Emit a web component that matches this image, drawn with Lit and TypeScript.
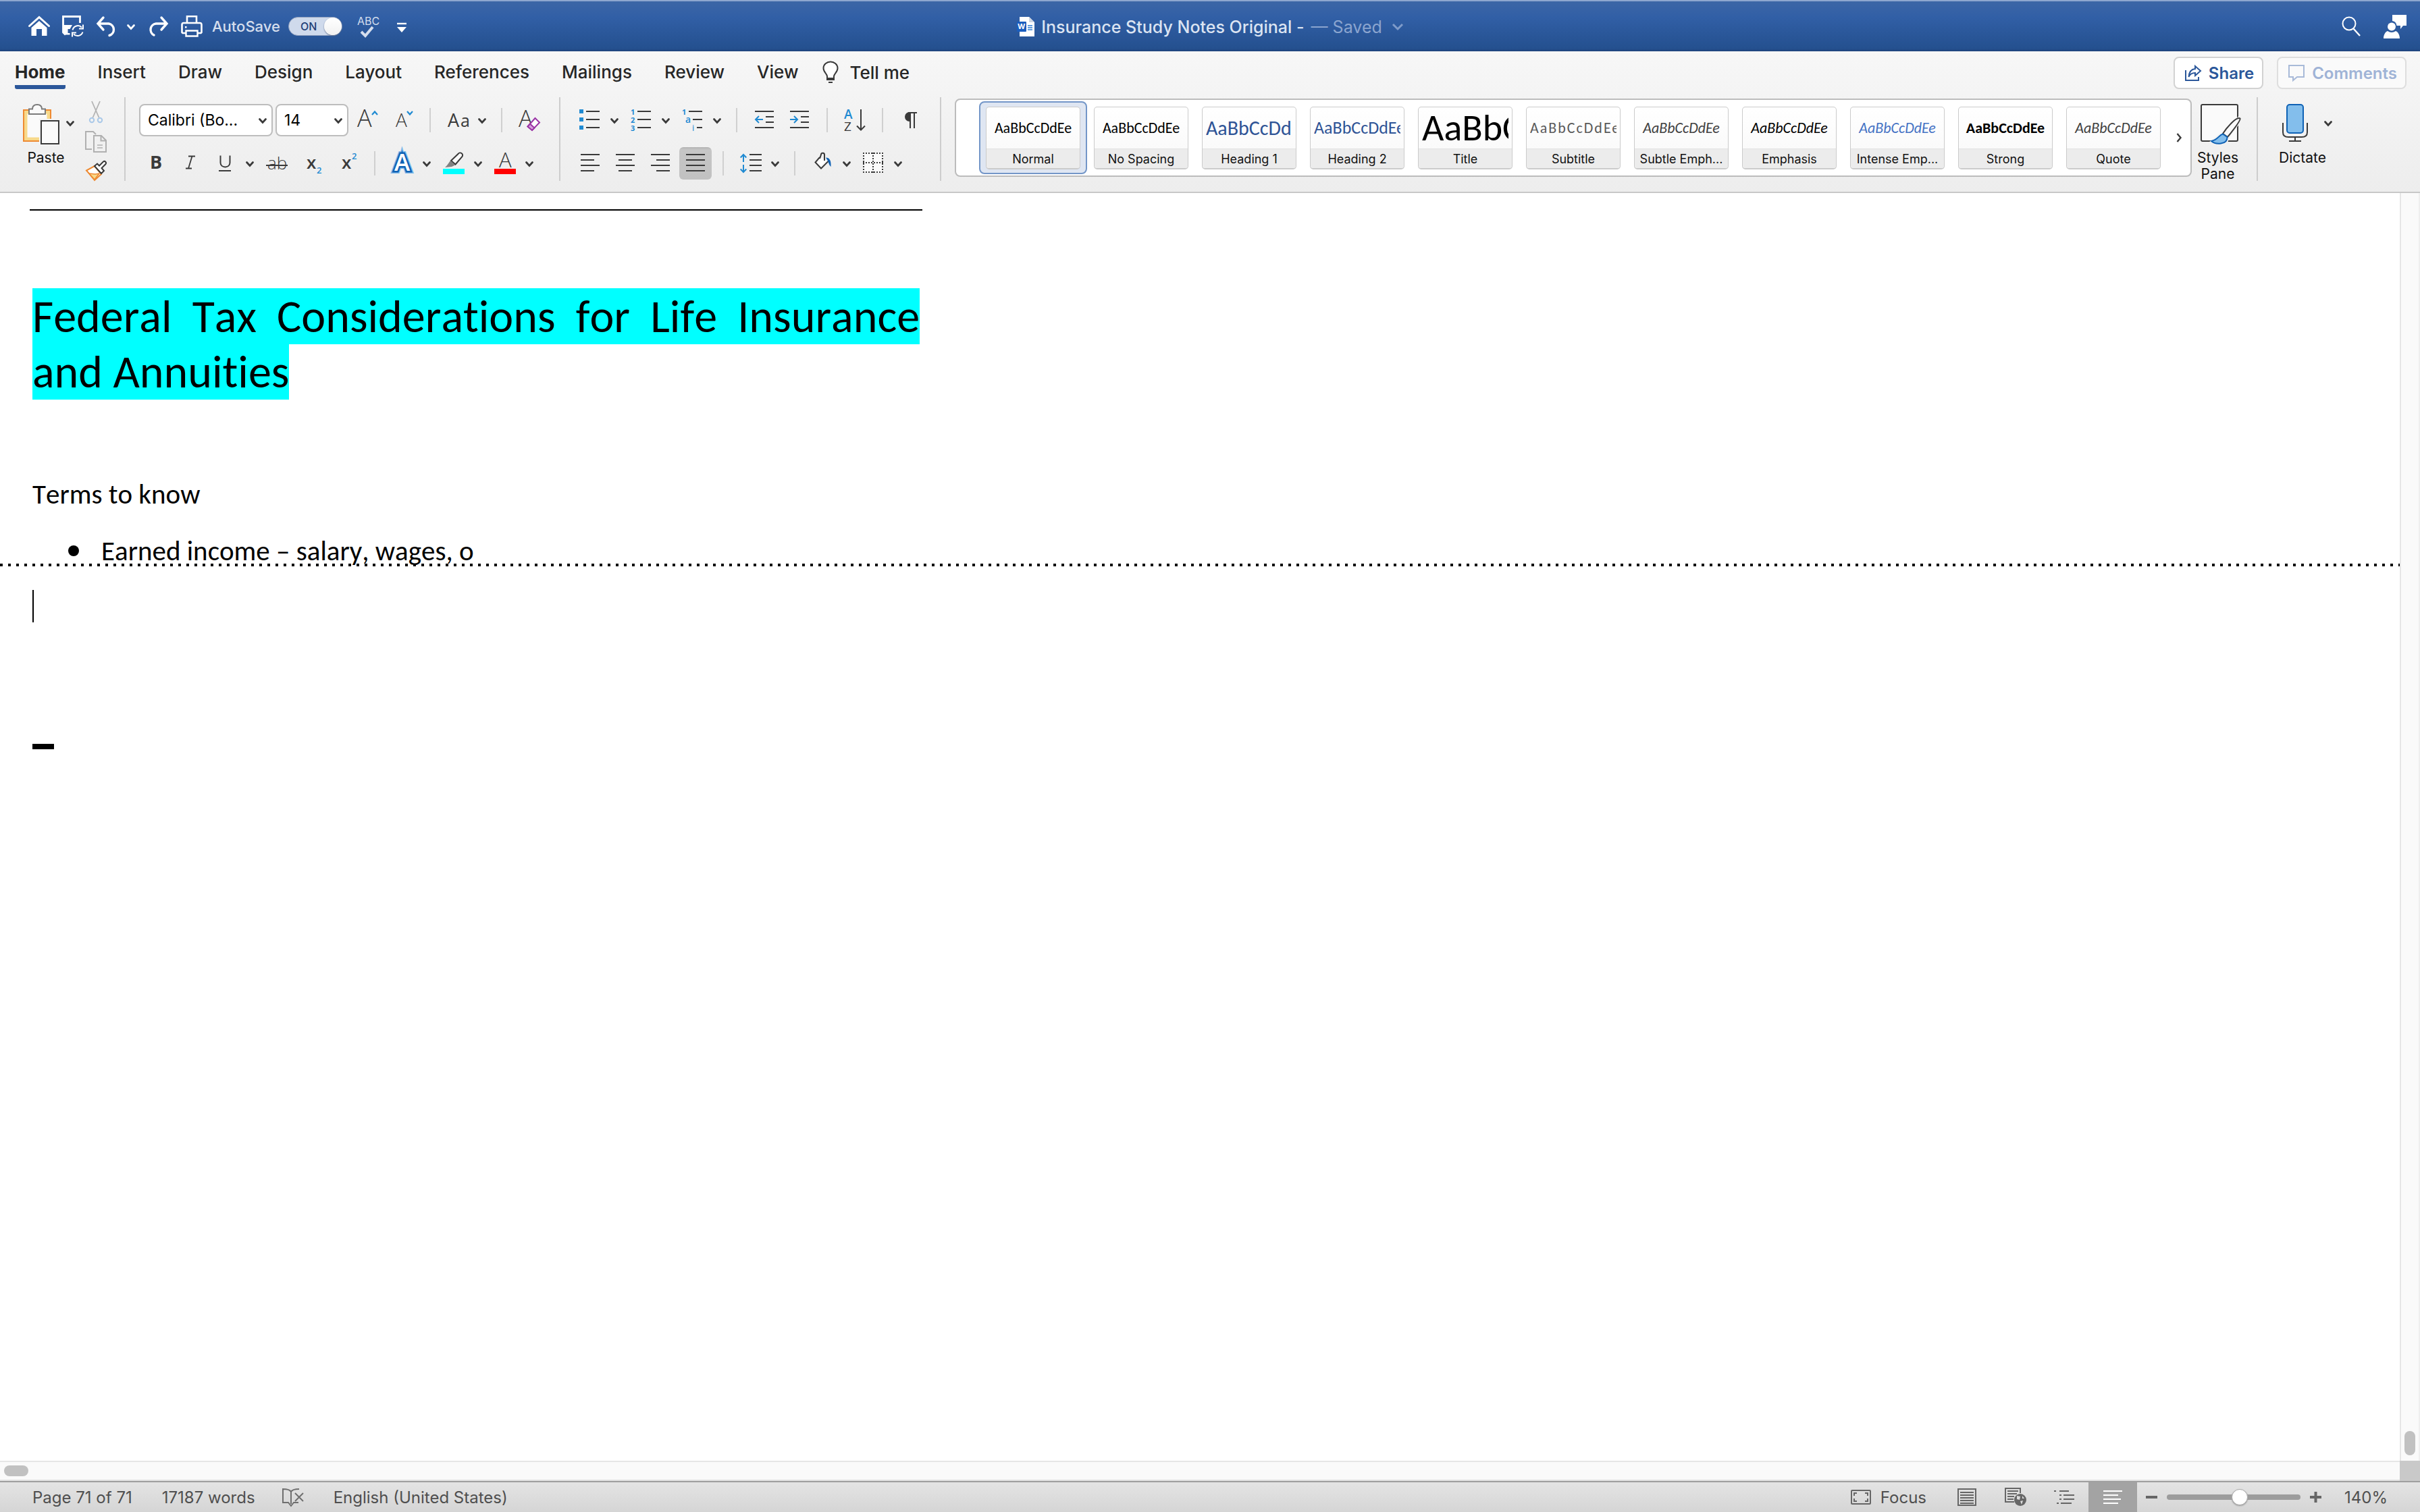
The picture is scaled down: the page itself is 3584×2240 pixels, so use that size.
import { LitElement, html, css, svg, nothing, TemplateResult } from "lit";
import { customElement, property } from "lit/decorators.js";
import { classMap } from "lit/directives/class-map.js";

const INK = "#3a3a3a";
const BLUE = "#1f8ad2";

const icon = (body: unknown, w = 32, h = 32) =>
  html`<svg width=${w} height=${h} viewBox="0 0 ${w} ${h}" fill="none" aria-hidden="true">${body}</svg>`;

const caretGlyph = (color = INK) =>
  icon(svg`<path d="M1.5 14.5 L6 19.5 L10.5 14.500" stroke=${color} stroke-width="2.800" stroke-linecap="round"/>`, 12, 32);

const lines = (rows: number[][], color = INK) =>
  rows.map(([x1, x2, y]) => svg`<path d="M${x1} ${y}H${x2}" stroke=${color} stroke-width="2"/>`);

const glyph = (t: string, x: number, y: number, size: number, color = INK, weight = 400, family = "Open Sans, sans-serif") =>
  svg`<text x=${x} y=${y} font-size=${size} fill=${color} font-weight=${weight} font-family=${family}>${t}</text>`;

const I = {
  home: svg`<path d="M1.500 15.500 L16 2.500 L30.500 15.500" stroke="#fff" stroke-width="3" stroke-linecap="round"/>
    <path d="M4.500 18 L16 8 L27.500 18 V30 H20 V20 H12 V30 H4.500Z" fill="#fff"/>`,
  save: svg`<path d="M26.500 11 V1.500 H1.500 V25 L5 28.500" stroke="#fff" stroke-width="2.800"/>
    <path d="M1 14 H15 L11.500 20 H8.500 V26 H11.500 V28.500 H5 L1 25Z" fill="#fff"/>
    <path d="M15.500 21.500 A8 8 0 0 1 29 17.500 M31 13.500 V19.500 H25 M30.500 24.500 A8 8 0 0 1 17 27.500 M15 31.500 V25.500 H21" stroke="#fff" stroke-width="2"/>`,
  undo: svg`<path d="M11 3 L3 12 L11 21 M3.500 12 H19 A9 9 0 0 1 20 29.500" stroke="#fff" stroke-width="3.400" stroke-linecap="round"/>`,
  redo: svg`<path d="M21 3 L29 12 L21 21 M28.500 12 H13 A9 9 0 0 0 10 29" stroke="#fff" stroke-width="3.400" stroke-linecap="round"/>`,
  print: svg`<path d="M9 11 V1.200 H23 V11 M7 26 H2.500 L1.500 25 V13.500 Q1.500 11 4 11 H28 Q30.500 11 30.500 13.500 V25 L29.500 26 H25" stroke="#fff" stroke-width="2.600"/>
    <path d="M7.500 22.500 H24.500 V30.500 H7.500Z" stroke="#fff" stroke-width="2.400"/><rect x="6" y="16" width="2.500" height="2.500" fill="#fff"/>`,
  abc: svg`${glyph("ABC", 0, 14, 16, "#d5deed", 400, "Inter, sans-serif")}
    <path d="M6 24 L12 30 L23 17" stroke="#d5deed" stroke-width="4"/>`,
  more: svg`<path d="M9 12H23" stroke="#fff" stroke-width="2.400"/><path d="M9 17 H23 L16 25Z" fill="#fff"/>`,
  doc: svg`<path d="M4 1 H18 L26 9 V30 H4Z" fill="#fff"/><path d="M18 1 V9 H26Z" fill="#cfd6e2"/>
    <rect x="0" y="8" width="14" height="15" rx="1" fill="#1a5dbe"/>
    ${glyph("W", 1, 19, 11, "#fff", 700, "Inter, sans-serif")}
    <path d="M16 14H23M16 17H23M16 20H23" stroke="#2b7cd3" stroke-width="1.500"/>`,
  search: svg`<circle cx="11" cy="11" r="9.500" stroke="#fff" stroke-width="2"/><path d="M17.500 18.500 L27 29" stroke="#fff" stroke-width="2.400"/>`,
  person: svg`<path d="M13 1 H34 V17 H29 L25 22 V17 H19.500 A8 8 0 0 0 13 10Z" fill="#fff"/>
    <circle cx="12" cy="18.500" r="6" fill="#fff"/><path d="M0 36 C0 30 3 26 6 25 Q12 29 18 25 C21 26 24 30 24 36Z" fill="#fff"/>`,
  bulb: svg`<path d="M7 25 V22 C7 18.500 1.500 16 1.500 10 A10.500 9.500 0 0 1 22.500 10 C22.500 16 17 18.500 17 22 V25Z" fill="#fff" stroke=${INK} stroke-width="2"/>
    <path d="M7 22 V27 H17 V22 M9 31 H15" stroke=${INK} stroke-width="2"/>`,
  paste: svg`<path d="M1 9 H41 V55 H1Z" fill="#fafafa"/>
    <path d="M4 12 H38 V52 H4Z" stroke="#f8d98a" stroke-width="5"/>
    <path d="M1 9 H41 V55 H1Z" stroke="#ee8a32" stroke-width="2"/>
    <path d="M9 15 V7.500 H14 C14 3 17 1 21 1 C25 1 28 3 28 7.500 H33 V15Z" fill="#fafafa" stroke="#7a7a7a" stroke-width="2"/>
    <rect x="24" y="22" width="32" height="40" fill="#f2f2f2"/>
    <rect x="27" y="25" width="26" height="34" fill="#fafafa" stroke=${INK} stroke-width="2"/>`,
  cut: svg`<path d="M10 0 L20.500 24 M22 0 L11.500 24" stroke="#b3b3b3" stroke-width="1.800"/>
    <circle cx="10" cy="28" r="3.200" stroke="#a9c8e8" stroke-width="2"/><circle cx="22" cy="28" r="3.200" stroke="#a9c8e8" stroke-width="2"/>`,
  copy: svg`<path d="M10 27 H1 V1 H12 L16 5" stroke="#b0b0b0" stroke-width="2"/>
    <path d="M13 7 H24 L31 14 V31 H13Z M23.500 7 V14.500 H31" stroke="#b0b0b0" stroke-width="2"/>
    <path d="M18 21H26M18 25H26" stroke="#b0b0b0" stroke-width="1.500"/>`,
  brush: svg`<path d="M14 8 L2 14.500 C6 19 10 24 14 29 L24 20Z" fill="#fff" stroke="#ee8a32" stroke-width="2"/>
    <path d="M6 19 L15 20 L21 19 L14 28Z" fill="#f8d98a" stroke="#ee8a32" stroke-width="1.500"/>
    <path d="M14 8 L18 4.500 L21 7.500 L27 1.500 A2.500 2.500 0 0 1 30.500 5 L24.500 11 L28 15 L24 19Z" fill="#fff" stroke=${INK} stroke-width="2"/>`,
  grow: svg`${glyph("A", 1, 26, 36, INK, 300)}<path d="M23 8 L27 3.500 L31 8" stroke=${BLUE} stroke-width="2.200"/>`,
  shrink: svg`${glyph("A", 6, 26, 28, INK, 300)}<path d="M23 3 L27 7.500 L31 3" stroke=${BLUE} stroke-width="2.200"/>`,
  aa: svg`${glyph("A", 1, 26, 27, INK, 400)}${glyph("a", 20, 26, 25, INK, 400)}`,
  clear: svg`${glyph("A", 0, 26, 35, INK, 300)}
    <path d="M24.500 13 L31 19.500 L20 31 L13.500 25.500Z" fill="#fff" stroke="#9a33a5" stroke-width="2"/>
    <path d="M17 21.500 L23.500 27.500 L20 31 L13.500 25.500Z" fill="#d9a3de" stroke="#9a33a5" stroke-width="2"/>`,
  bold: glyph("B", 8, 24, 27, INK, 700),
  italic: svg`<path d="M13 5.500H23M9 23.500H18M18.500 5.500L13 23.500" stroke=${INK} stroke-width="1.800"/>`,
  underline: svg`<path d="M8.500 4.500 V15 C8.500 23.500 22.500 23.500 22.500 15 V4.500" stroke=${INK} stroke-width="2"/><path d="M6 27H24" stroke=${INK} stroke-width="2"/>`,
  strike: svg`${glyph("ab", 2, 25, 26, INK, 300)}<path d="M0 19H32" stroke=${INK} stroke-width="2"/>`,
  sub: svg`${glyph("x", 8, 24, 26, INK, 600)}${glyph("2", 23, 31, 13, BLUE, 600)}`,
  sup: svg`${glyph("x", 8, 24, 26, INK, 600)}${glyph("2", 23, 10, 13, BLUE, 600)}`,
  effects: svg`<g font-size="35" font-weight="600" font-family="Open Sans, sans-serif" fill="#fff">
    <text x="4" y="27" stroke="#7fb9ea" stroke-width="8">A</text>
    <text x="4" y="27" stroke="#0f62b5" stroke-width="5">A</text>
    <text x="4" y="27">A</text></g>`,
  marker: svg`<path d="M12 12 L22.500 2 A3.500 3.500 0 0 1 28.500 6 L18.500 17.500Z" fill="#fafafa" stroke=${INK} stroke-width="2"/>
    <path d="M11 12 L18 18.500 L13 21 L3 22 L6 19Z" fill="#808080"/><rect y="24" width="32" height="8" fill="#0ff"/>`,
  color: svg`${glyph("A", 7, 22, 31, INK, 300)}<rect y="24" width="32" height="8" fill="#f00"/>`,
  bullets: svg`<path d="M0 0H6V6H0ZM0 12H6V18H0ZM0 24H6V30H0Z" fill=${BLUE}/>${lines([[10, 30, 3], [10, 30, 15], [10, 30, 27]])}`,
  numbers: svg`${glyph("1", 0, 8, 11, BLUE, 700)}${glyph("2", 0, 20, 11, BLUE, 700)}${glyph("3", 0, 32, 11, BLUE, 700)}
    ${lines([[10, 30, 3], [10, 30, 15], [10, 30, 27]])}`,
  multi: svg`${glyph("1", 0, 8, 11, BLUE, 700)}${glyph("a", 5, 20, 14, BLUE, 600)}${glyph("i", 15, 32, 13, BLUE, 400)}
    ${lines([[10, 30, 3], [16, 30, 15], [22, 30, 27]])}`,
  outdent: svg`${lines([[2, 30, 3], [18, 30, 11], [18, 30, 19], [2, 30, 27]])}<path d="M14 15H3M8 10L3 15L8 20" stroke=${BLUE} stroke-width="2"/>`,
  indent: svg`${lines([[2, 30, 3], [18, 30, 11], [18, 30, 19], [2, 30, 27]])}<path d="M2 15H13M8 10L13 15L8 20" stroke=${BLUE} stroke-width="2"/>`,
  sort: svg`${glyph("A", 0, 14, 19, BLUE, 600)}${glyph("Z", 0, 32, 19, INK, 400)}<path d="M25 0V30M19 24.500L25 30.500L31 24.500" stroke=${INK} stroke-width="2"/>`,
  pilcrow: svg`<path d="M15 4 A7 7 0 0 0 15 18Z" fill=${INK}/><path d="M13 5H26M16 5V28M22 5V28" stroke=${INK} stroke-width="2"/>`,
  left: svg`${lines([[2, 30, 3], [2, 22, 11], [2, 30, 19], [2, 22, 27]])}`,
  center: svg`${lines([[2, 30, 3], [6, 26, 11], [2, 30, 19], [6, 26, 27]])}`,
  right: svg`${lines([[2, 30, 3], [10, 30, 11], [2, 30, 19], [10, 30, 27]])}`,
  justify: svg`${lines([[2, 30, 3], [2, 30, 11], [2, 30, 19], [2, 30, 27]])}`,
  spacing: svg`${lines([[14, 32, 3], [14, 32, 11], [14, 32, 19], [14, 32, 27]])}
    <path d="M5 3V14M.7 7.500L5 3L9.300 7.500M5 18V29M.7 24.500L5 29L9.300 24.500" stroke=${BLUE} stroke-width="2"/>`,
  bucket: svg`<path d="M12 7 L5.500 14.500 L14 23.500 L25 12.500" fill="#fff" stroke=${INK} stroke-width="2"/>
    <path d="M12 9 L14 3 A2.500 2.500 0 0 1 19 3.500 V12" stroke=${INK} stroke-width="2"/>
    <path d="M21 7.500 C27 7.500 29 12 28.500 21 C26 19 25 15 24.500 13Z" fill="#0f62b5"/>`,
  borders: svg`<rect width="30" height="30" fill="#fafafa"/><path d="M0 1H30M0 15H30M0 29H30M1 0V30M15 0V30M29 0V30" stroke=${INK} stroke-width="2" stroke-dasharray="2 2"/>`,
  next: svg`<path d="M1.500 1 L6.500 7 L1.500 13" stroke=${INK} stroke-width="2.400"/>`,
  styles: svg`<rect x="1" y="1" width="54" height="54" rx="2" fill="#fafafa" stroke=${INK} stroke-width="2"/>
    <path d="M58 16 L34 44 L28 44 L12 57 H40 L44 48 L60 26Z" fill="#f2f2f2"/>
    <path d="M58.500 21.500 C60 25 44 44 40 49 L33 44 C38 36 53 18 58.500 21.500Z" fill="#fafafa" stroke=${INK} stroke-width="2"/>
    <path d="M33 44.500 C27 46 26 53 16 55 C22 60.500 40 61 39.500 49Z" fill="#83beec" stroke="#0f62b5" stroke-width="2"/>`,
  mic: svg`<path d="M1 28 V42 Q1 49 9 49 H29 Q37 49 37 42 V28 M19 49 V55 M10 55 H28" stroke=${INK} stroke-width="2"/>
    <rect x="7" y="1" width="24" height="42" rx="4" fill="#83beec" stroke="#0f62b5" stroke-width="2"/>`,
  share: svg`<path d="M1 8 V23 H20 V18" stroke="#2b579a" stroke-width="2"/>
    <path d="M15 2 L23 9 L15 16 V12 C10 12 7 14 5.500 18 C6 11 9 6.500 15 6Z" stroke="#2b579a" stroke-width="2"/>`,
  comment: svg`<path d="M1 1 H23 V18 H13 L7 23 V18 H1Z" stroke="#a8bad8" stroke-width="2"/>`,
  proof: svg`<path d="M13 24 V6 Q11 2 1 2 V22 H9 L13 27 L17 22 H24 M13 6 Q15 2 25 2" stroke="#6f6f6f" stroke-width="2"/>
    <path d="M19 8 L31 20 M31 8 L19 20" stroke="#6f6f6f" stroke-width="2"/>`,
  focus: svg`<rect x="1" y="1" width="28" height="20" rx="1" stroke="#666" stroke-width="2"/>
    <path d="M5 9V5H9M21 5H25V9M25 13V17H21M9 17H5V13" stroke="#666" stroke-width="2"/>`,
  pageView: svg`<rect x="1" y="1" width="26" height="24" stroke="#666" stroke-width="2"/>
    <path d="M4 6H24M4 10H24M4 14H24M4 18H24M4 22H24" stroke="#666" stroke-width="2"/>`,
  webView: svg`<path d="M14 21 H1 V1 H23 V8" stroke="#666" stroke-width="2"/>
    <path d="M4 5H20M4 9H18M4 13H14M4 17H13" stroke="#666" stroke-width="2"/>
    <circle cx="23" cy="18" r="9" fill="#666"/><path d="M18 12 L23 13 L22 18 L18 17Z M23 20 L27 19 L25 25Z M26 12 L29 16 L26 16Z" fill="#ddd"/>`,
  outlineView: svg`<path d="M0 3H3M8 3H22M8 9H11M14 9H30M8 15H11M14 15H30M4 21H7M10 21H26" stroke="#666" stroke-width="2"/>`,
  draftView: svg`<path d="M0 3H28M0 9H22M0 15H26M0 21H22" stroke="#fff" stroke-width="2"/>`,
  minus: svg`<path d="M0 12H17" stroke="#666" stroke-width="4"/>`,
  plus: svg`<path d="M0 12H17M8.500 4V20" stroke="#666" stroke-width="4"/>`,
};

const reset = css`
  *, :host { box-sizing: border-box; }
  :host { font-family: Inter, "Liberation Sans", sans-serif; }
  svg { display: block; flex: none; overflow: visible; }
  button { appearance: none; background: none; border: 0; padding: 0; margin: 0; font: inherit; color: inherit; display: flex; align-items: center; justify-content: center; flex: none; }
`;

@customElement("word-titlebar")
class WordTitlebar extends LitElement {
  static styles = [reset, css`
    :host { display: grid; grid-template-columns: 1fr auto 1fr; align-items: center; height: 76px; padding: 0 20px; color: #d5deed;
      background: linear-gradient(#3c66a6 0, #315fa6 24px, #24508f 70px, #1f437c 74px); border-top: 2px solid #8ea7cf; }
    .quick { display: flex; align-items: center; gap: 18px; padding-left: 22px; }
    .caret { margin-left: -4px; }
    .autosave { display: flex; align-items: center; gap: 12px; font-size: 22px; font-weight: 500; margin: 0 4px 0 -4px; }
    .switch { display: grid; width: 80px; height: 28px; }
    .switch input { appearance: none; grid-area: 1 / 1; margin: 0; border-radius: 14px; background: #cfdaec; border: 1px solid #8f9fbd; display: flex; justify-content: flex-end; align-items: center; }
    .switch input::before { content: ""; width: 26px; height: 26px; border-radius: 50%; background: linear-gradient(#fff, #f1f1f1); box-shadow: 0 1px 2px #5a6a88; }
    .on { grid-area: 1 / 1; font-size: 16px; font-weight: 500; line-height: 28px; padding-left: 18px; color: #1f3f78; pointer-events: none; }
    .title { display: flex; align-items: center; gap: 10px; font-size: 25px; font-weight: 500; white-space: pre; padding-top: 2px; }
    .name { color: #dbe4f2; }
    .saved { color: #8ba5cf; font-weight: 400; display: flex; align-items: center; gap: 8px; }
    .end { display: flex; justify-content: flex-end; align-items: center; gap: 34px; }
  `];
  render() {
    return html`
      <div class="quick">
        <button aria-label="Home">${icon(I.home)}</button>
        <button aria-label="Save">${icon(I.save)}</button>
        <button aria-label="Undo">${icon(I.undo)}</button>
        <button class="caret" aria-label="Undo history">${caretGlyph("#fff")}</button>
        <button aria-label="Redo">${icon(I.redo)}</button>
        <button aria-label="Print">${icon(I.print)}</button>
        <div class="autosave">
          <label for="autosave">AutoSave</label>
          <span class="switch"><input id="autosave" type="checkbox" checked><span class="on">ON</span></span>
        </div>
        <button aria-label="Spelling">${icon(I.abc)}</button>
        <button aria-label="Customize toolbar">${icon(I.more)}</button>
      </div>
      <div class="title">
        ${icon(I.doc, 26, 32)}
        <span class="name">Insurance Study Notes Original -</span>
        <span class="saved">— Saved ${icon(svg`<path d="M1 2 L8 9 L15 2" stroke="#7f9bc9" stroke-width="3"/>`, 16, 12)}</span>
      </div>
      <div class="end">
        <button aria-label="Search">${icon(I.search, 28, 30)}</button>
        <button aria-label="Account">${icon(I.person, 34, 36)}</button>
      </div>`;
  }
}

@customElement("word-tabs")
class WordTabs extends LitElement {
  static styles = [reset, css`
    :host { display: flex; align-items: center; height: 64px; padding: 0 20px 0 22px; color: #262626; font-size: 26px; font-weight: 500; }
    nav { display: flex; gap: 48px; align-self: stretch; flex: 1; }
    a { color: inherit; text-decoration: none; line-height: 62px; height: 56px; white-space: nowrap; }
    .current { font-weight: 700; border-bottom: 6px solid #2b579a; border-radius: 3px; }
    .tell { gap: 16px; height: 62px; margin-left: -12px; }
    .actions { display: flex; gap: 20px; }
    .action { height: 48px; padding: 0 12px 0 15px; gap: 11px; border: 2px solid #d2d2d2; border-radius: 8px; background: #fff; color: #2b579a; font-size: 24px; font-weight: 600; }
    .muted { color: #9fb3d6; background: #fafafa; border-color: #dedede; }
  `];
  render() {
    const tabs = ["Home", "Insert", "Draw", "Design", "Layout", "References", "Mailings", "Review", "View"];
    return html`
      <nav>
        ${tabs.map((t, i) => html`<a href="#${t.toLowerCase()}" class=${classMap({ current: i === 0 })}>${t}</a>`)}
        <button class="tell">${icon(I.bulb, 24, 32)}Tell me</button>
      </nav>
      <div class="actions">
        <button class="action">${icon(I.share, 24, 24)}Share</button>
        <button class="action muted" disabled>${icon(I.comment, 24, 24)}Comments</button>
      </div>`;
  }
}

type Tool = [string, unknown, ("caret" | "sep" | "on")?, "sep"?];

@customElement("tool-row")
class ToolRow extends LitElement {
  @property({ attribute: false }) tools: Tool[] = [];
  static styles = [reset, css`
    :host { display: flex; align-items: center; height: 48px; }
    .tool { width: 32px; height: 32px; margin-right: 20px; }
    .on { width: 48px; height: 48px; margin: 0 12px 0 -8px; border-radius: 6px; background: linear-gradient(#b2b2b2 0, #c6c6c6 4px, #c1c1c1); }
    .caret { margin: 0 18px 0 -6px; }
    .sep { width: 2px; height: 36px; background: #d0d0d0; margin: 0 24px 0 4px; }
  `];
  render() {
    return this.tools.map(([name, body, kind, end]) => html`
      <button class=${classMap({ tool: true, on: kind === "on" })} aria-label=${name}>${icon(body)}</button>
      ${kind === "caret" ? html`<button class="caret" aria-label="${name} options">${caretGlyph()}</button>` : nothing}
      ${kind === "sep" || end === "sep" ? html`<span class="sep"></span>` : nothing}`);
  }
}

interface StyleCard { name: string; kind: string; selected?: boolean; }

@customElement("style-gallery")
class StyleGallery extends LitElement {
  static styles = [reset, css`
    :host { display: flex; align-items: center; height: 116px; min-width: 0; padding-left: 34px; border: 2px solid #bcbcbc; border-radius: 8px; background: #fff; }
    .list { display: flex; }
    .slot { padding: 6px 8px; border: 2px solid transparent; border-radius: 8px; height: 108px; width: 160px; }
    .selected { background: #dfe6f2; border-color: #7396c8; }
    .card { display: block; width: 100%; height: 93px; border: 1px solid #cbcbcb; border-bottom-width: 2px; border-radius: 5px; overflow: hidden; background: linear-gradient(#fff, #f8f8f8); }
    .preview { display: block; height: 61px; line-height: 61px; margin: 0 5px; overflow: hidden; white-space: nowrap; font-family: Carlito, Lato, sans-serif; font-size: 22px; color: #000; text-align: center; }
    .label { display: block; height: 29px; line-height: 29px; border-top: 1px solid #e2e2e2; background: #ececec; color: #111; font-size: 18px; }
    .h1 { font-size: 30px; color: #2f5496; text-align: left; }
    .h2 { font-size: 26px; color: #2f5496; text-align: left; }
    .title { font-size: 56px; text-align: left; }
    .subtitle { color: #5a5a5a; letter-spacing: 2px; text-align: left; }
    .subtle { font-style: italic; color: #404040; }
    .emph { font-style: italic; }
    .intense { font-style: italic; color: #4472c4; }
    .strong { font-weight: 700; }
    .next { margin: 0 auto; }
  `];
  cards: StyleCard[] = [
    { name: "Normal", kind: "normal", selected: true }, { name: "No Spacing", kind: "normal" },
    { name: "Heading 1", kind: "h1" }, { name: "Heading 2", kind: "h2" }, { name: "Title", kind: "title" },
    { name: "Subtitle", kind: "subtitle" }, { name: "Subtle Emph...", kind: "subtle" }, { name: "Emphasis", kind: "emph" },
    { name: "Intense Emp...", kind: "intense" }, { name: "Strong", kind: "strong" }, { name: "Quote", kind: "subtle" },
  ];
  render() {
    return html`
      <div class="list">
        ${this.cards.map((c) => html`<div class=${classMap({ slot: true, selected: !!c.selected })}>
          <button class="card"><span class="preview ${c.kind}">AaBbCcDdEe</span><span class="label">${c.name}</span></button>
        </div>`)}
      </div>
      <button class="next" aria-label="More styles">${icon(I.next, 8, 14)}</button>`;
  }
}

@customElement("word-ribbon")
class WordRibbon extends LitElement {
  static styles = [reset, css`
    :host { display: flex; align-items: flex-start; height: 146px; padding-top: 4px; color: #111; border-bottom: 2px solid #c8c8c8; }
    .divider { width: 2px; height: 124px; background: #cdcdcd; flex: none; }
    .big { display: flex; flex-direction: column; padding-top: 10px; font-size: 21px; line-height: 24px; text-align: center; }
    .big button { flex-direction: column; }
    .face { display: flex; height: 68px; align-items: flex-start; gap: 10px; }
    .face svg:last-child:not(:first-child) { margin-top: 12px; }
    .clip { display: flex; flex-direction: column; gap: 12px; padding: 6px 26px 0 24px; }
    .paste { padding-left: 34px; }
    .paste .face { width: 68px; }
    .group { display: flex; flex-direction: column; gap: 16px; padding-top: 10px; flex: none; }
    .font { padding-left: 20px; width: 642px; }
    .row { display: flex; gap: 4px; }
    .indent { margin-left: 8px; }
    .after { margin-left: 8px; }
    .field { display: grid; }
    select { appearance: none; grid-area: 1 / 1; height: 48px; padding: 0 0 0 11px; margin: 0; border: 2px solid #bdbdbd; border-radius: 8px; background: #fff; color: #000; font: 400 23px Inter, sans-serif; }
    .field svg { grid-area: 1 / 1; justify-self: end; align-self: center; margin-right: 9px; pointer-events: none; }
    .family { width: 198px; }
    .size { width: 108px; }
    .para { padding-left: 28px; width: 562px; }
    style-gallery { flex: 1; margin: 2px 8px 0 20px; }
    .pane { width: 88px; align-items: flex-start; }
    .pane .face { width: 52px; }
    style-gallery { border-right-width: 2px; }
    .dictate { padding-left: 28px; width: 240px; align-items: flex-start; }
    .dictate .face { padding-left: 8px; gap: 24px; width: 76px; }
  `];
  fontRow: Tool[] = [["Grow font", I.grow], ["Shrink font", I.shrink, "sep"], ["Change case", I.aa, "caret", "sep"], ["Clear formatting", I.clear]];
  fontRow2: Tool[] = [["Bold", I.bold], ["Italic", I.italic], ["Underline", I.underline, "caret"], ["Strikethrough", I.strike], ["Subscript", I.sub],
    ["Superscript", I.sup, "sep"], ["Text effects", I.effects, "caret"], ["Highlight", I.marker, "caret"], ["Font color", I.color, "caret"]];
  paraRow: Tool[] = [["Bullets", I.bullets, "caret"], ["Numbering", I.numbers, "caret"], ["Multilevel list", I.multi, "caret", "sep"],
    ["Decrease indent", I.outdent], ["Increase indent", I.indent, "sep"], ["Sort", I.sort, "sep"], ["Show marks", I.pilcrow]];
  paraRow2: Tool[] = [["Align left", I.left], ["Center", I.center], ["Align right", I.right], ["Justify", I.justify, "on", "sep"],
    ["Line spacing", I.spacing, "caret", "sep"], ["Shading", I.bucket, "caret"], ["Borders", I.borders, "caret"]];
  render() {
    return html`
      <div class="big paste"><button><span class="face">${icon(I.paste, 54, 60)}${caretGlyph()}</span>Paste</button></div>
      <div class="clip">
        <button aria-label="Cut">${icon(I.cut)}</button>
        <button aria-label="Copy">${icon(I.copy)}</button>
        <button aria-label="Format painter">${icon(I.brush)}</button>
      </div>
      <span class="divider"></span>
      <div class="group font">
        <div class="row">
          <span class="field"><select class="family" aria-label="Font"><option>Calibri (Bo...</option></select>${caretGlyph()}</span>
          <span class="field"><select class="size" aria-label="Font size"><option>14</option></select>${caretGlyph()}</span>
          <tool-row class="after" .tools=${this.fontRow}></tool-row>
        </div>
        <tool-row class="indent" .tools=${this.fontRow2}></tool-row>
      </div>
      <span class="divider"></span>
      <div class="group para">
        <tool-row .tools=${this.paraRow}></tool-row>
        <tool-row .tools=${this.paraRow2}></tool-row>
      </div>
      <span class="divider"></span>
      <style-gallery></style-gallery>
      <div class="big pane"><button><span class="face">${icon(I.styles, 60, 60)}</span>Styles<br>Pane</button></div>
      <span class="divider"></span>
      <div class="big dictate"><button><span class="face">${icon(I.mic, 38, 56)}${caretGlyph()}</span>Dictate</button></div>`;
  }
}

@customElement("word-document")
class WordDocument extends LitElement {
  static styles = [reset, css`
    :host { display: grid; grid-template-columns: 1fr 30px; grid-template-rows: 1fr 30px; min-height: 0; background: #fff; font-family: Carlito, Lato, sans-serif; font-variant-ligatures: none; font-kerning: none; color: #000; }
    .page { padding-top: 24px; min-width: 0; overflow: hidden; }
    hr { border: 0; height: 2px; background: #000; width: 1322px; margin: 0 0 0 44px; }
    .text { margin-left: 48px; width: 1314px; }
    h1 { font-size: 68px; font-weight: 400; line-height: 82px; text-align: justify; margin: 116px 0 0; }
    mark { background: #0ff; color: #000; }
    p { font-size: 41px; line-height: 48px; margin: 116px 0 36px; }
    ul { list-style: none; margin: 0; padding: 0; }
    li { font-size: 41px; line-height: 48px; display: flex; align-items: center; gap: 33px; padding-left: 53px; }
    li::before { content: ""; width: 16px; height: 16px; border-radius: 50%; background: #000; }
    .split { height: 4px; margin-top: -5px; background: repeating-linear-gradient(90deg, #000 0 4px, #fff0 4px 12px); }
    .cursor { width: 2px; height: 48px; background: #000; margin-top: 35px; }
    .end { width: 32px; height: 8px; background: #000; margin-top: 180px; }
    .vbar { border-left: 2px solid #e6e6e6; border-right: 2px solid #efefef; background: #fafafa; display: flex; flex-direction: column; justify-content: flex-end; align-items: center; padding-bottom: 8px; }
    .vthumb { width: 16px; height: 36px; border-radius: 8px; background: #c1c1c1; }
    .hbar { border-top: 2px solid #e6e6e6; border-bottom: 2px solid #e2e2e2; background: #fafafa; display: flex; align-items: center; padding-left: 6px; }
    .hthumb { width: 36px; height: 16px; border-radius: 8px; background: #c1c1c1; }
    .corner { background: #c9c9c9; }
  `];
  render() {
    return html`
      <div class="page">
        <hr>
        <div class="text">
          <h1><mark>Federal Tax Considerations for Life Insurance and Annuities</mark></h1>
          <p>Terms to know</p>
          <ul><li>Earned income – salary, wages, o</li></ul>
        </div>
        <div class="split"></div>
        <div class="text"><div class="cursor"></div><div class="end"></div></div>
      </div>
      <div class="vbar"><div class="vthumb"></div></div>
      <div class="hbar"><div class="hthumb"></div></div>
      <div class="corner"></div>`;
  }
}

@customElement("word-status")
class WordStatus extends LitElement {
  static styles = [reset, css`
    :host { display: flex; align-items: center; justify-content: space-between; height: 46px; border-top: 2px solid #9f9f9f; background: linear-gradient(#e4e4e4, #d5d5d5); color: #4f4f4f; font-size: 24px; padding: 0 48px; }
    .left, .right, .zoom { display: flex; align-items: center; height: 100%; }
    .left { gap: 44px; }
    .left svg { margin: 0 0 0 -4px; }
    .focus { gap: 14px; margin-right: 24px; }
    .view { width: 72px; height: 100%; }
    .active { background: #a3a3a3; }
    .zoom { gap: 14px; padding-left: 13px; }
    input { appearance: none; width: 198px; height: 8px; border-radius: 4px; background: #9c9c9c; margin: 0; }
    input::-webkit-slider-thumb { appearance: none; width: 24px; height: 24px; border-radius: 50%; background: #fff; border: 1px solid #a8a8a8; box-shadow: 0 1px 2px #999; }
    .percent { margin-left: 20px; }
  `];
  render() {
    const views: [string, TemplateResult][] = [
      ["Print layout", icon(I.pageView, 28, 26)], ["Web layout", icon(I.webView, 32, 28)],
      ["Outline", icon(I.outlineView, 30, 24)], ["Draft", icon(I.draftView, 28, 24)],
    ];
    return html`
      <div class="left">
        <span>Page 71 of 71</span><span>17187 words</span>
        <button aria-label="Proofing">${icon(I.proof, 32, 28)}</button>
        <span>English (United States)</span>
      </div>
      <div class="right">
        <button class="focus">${icon(I.focus, 30, 22)}Focus</button>
        ${views.map(([n, i]) => html`<button class=${classMap({ view: true, active: n === "Draft" })} aria-label=${n}>${i}</button>`)}
        <div class="zoom">
          <button aria-label="Zoom out">${icon(I.minus, 17, 24)}</button>
          <input type="range" min="0" max="100" value="55" aria-label="Zoom">
          <button aria-label="Zoom in">${icon(I.plus, 17, 24)}</button>
          <span class="percent">140%</span>
        </div>
      </div>`;
  }
}

@customElement("app-root")
class AppRoot extends LitElement {
  static styles = css`
    :host { display: flex; flex-direction: column; height: 100vh; overflow: hidden; }
    .head { background: linear-gradient(#f7f7f7, #ededed); }
    word-document { flex: 1; }
  `;
  render() {
    return html`
      <word-titlebar></word-titlebar>
      <div class="head"><word-tabs></word-tabs><word-ribbon></word-ribbon></div>
      <word-document></word-document>
      <word-status></word-status>`;
  }
}
